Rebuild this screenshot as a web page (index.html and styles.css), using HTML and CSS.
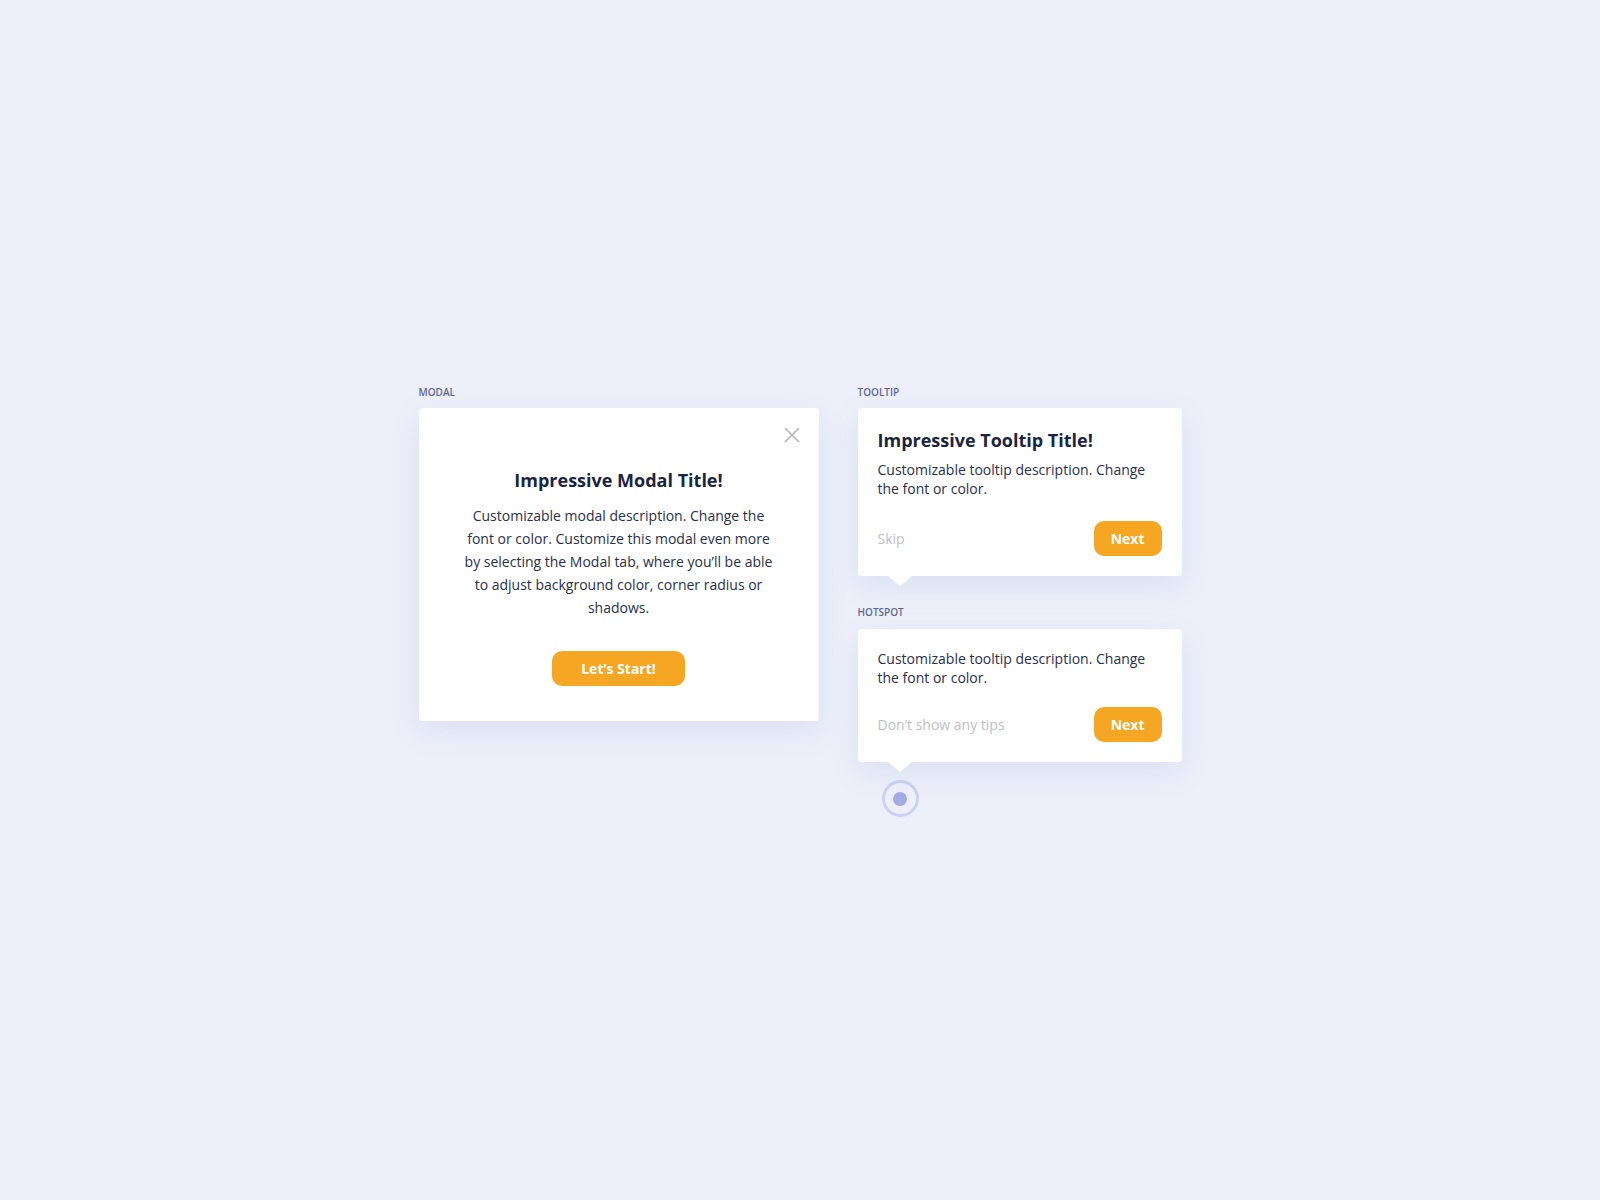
FILE: index.html
```html
<!DOCTYPE html>
<html lang="en">
<head>
    <meta charset="UTF-8">
    <meta name="viewport" content="width=device-width, initial-scale=1.0">
    <title>Onboarding Components</title>
    <link rel="stylesheet" href="styles.css">
</head>
<body>

    <div class="board">
        <div class="column modal-column">
            <div class="label">Modal</div>
            <div class="card modal">
                <button class="close" type="button" aria-label="Close">
                    <svg width="16" height="16" viewBox="0 0 16 16">
                        <path d="M1 1 L15 15 M15 1 L1 15" stroke="#b4b4b8" stroke-width="1.6" fill="none"/>
                    </svg>
                </button>
                <h2 class="modal-title">Impressive Modal Title!</h2>
                <p class="modal-text">Customizable modal description. Change the font or color. Customize this modal even more by selecting the Modal tab, where you’ll be able to adjust background color, corner radius or shadows.</p>
                <button class="btn" type="button">Let’s Start!</button>
            </div>
        </div>

        <div class="column tip-column">
            <div class="label">Tooltip</div>
            <div class="card tip">
                <h3 class="tip-title">Impressive Tooltip Title!</h3>
                <p class="tip-text">Customizable tooltip description. Change the font or color.</p>
                <div class="tip-footer">
                    <span class="muted">Skip</span>
                    <button class="btn" type="button">Next</button>
                </div>
            </div>

            <div class="label hotspot-label">Hotspot</div>
            <div class="card tip">
                <p class="tip-text">Customizable tooltip description. Change the font or color.</p>
                <div class="tip-footer hotspot-footer">
                    <span class="muted">Don’t show any tips</span>
                    <button class="btn" type="button">Next</button>
                </div>
            </div>
            <div class="hotspot"><span class="dot"></span></div>
        </div>
    </div>

</body>
</html>
```

FILE: styles.css
```css
body {
    margin: 0;
    font-family: "Open Sans", "Noto Sans", Arial, sans-serif;
    background-color: #edf0fa;
    color: #1f2944;
}

.board {
    display: flex;
    justify-content: center;
    gap: 39px;
    padding-top: 385px;
}

.column {
    display: flex;
    flex-direction: column;
}

.modal-column {
    width: 400px;
}

.tip-column {
    width: 324px;
}

.label {
    font-size: 10px;
    line-height: 14px;
    font-weight: 600;
    text-transform: uppercase;
    color: #5f6890;
    margin-bottom: 9px;
}

.hotspot-label {
    margin-top: 29px;
    margin-bottom: 10px;
}

.card {
    position: relative;
    background-color: white;
    border-radius: 4px;
    box-shadow: 0 10px 30px rgba(95, 115, 200, 0.13);
}

.modal {
    display: flex;
    flex-direction: column;
    align-items: center;
    padding: 60px 40px 35px;
}

.close {
    position: absolute;
    top: 19px;
    right: 19px;
    padding: 0;
    border: none;
    background: none;
    line-height: 0;
    cursor: pointer;
}

.modal-title {
    margin: 0;
    font-size: 18px;
    line-height: 24px;
    font-weight: 700;
    color: #1c2540;
}

.modal-text {
    margin: 12px 0 0;
    max-width: 312px;
    font-size: 14px;
    line-height: 23px;
    text-align: center;
    color: #28304a;
}

.btn {
    font-family: inherit;
    font-size: 14px;
    font-weight: 700;
    color: white;
    background-color: #f5a623;
    border: none;
    border-radius: 10px;
    height: 35px;
    padding: 0 17px;
    cursor: pointer;
}

.modal .btn {
    margin-top: 32px;
    padding: 0 29px;
}

.tip {
    padding: 20px;
}

.tip::after {
    content: "";
    position: absolute;
    left: 30px;
    bottom: -10px;
    border-left: 12px solid transparent;
    border-right: 12px solid transparent;
    border-top: 10px solid white;
}

.tip-title {
    margin: 0 0 8px;
    font-size: 18px;
    line-height: 24px;
    font-weight: 700;
    color: #1c2540;
}

.tip-text {
    margin: 0;
    font-size: 14px;
    line-height: 19px;
    color: #28304a;
}

.tip-footer {
    display: flex;
    justify-content: space-between;
    align-items: center;
    margin-top: 23px;
}

.hotspot-footer {
    margin-top: 20px;
}

.muted {
    font-size: 14px;
    color: #c0c0c4;
}

.hotspot {
    width: 31px;
    height: 31px;
    margin: 18px 0 0 24px;
    border: 3px solid #ccd3ee;
    border-radius: 50%;
    display: flex;
    align-items: center;
    justify-content: center;
}

.dot {
    width: 14px;
    height: 14px;
    border-radius: 50%;
    background-color: #a3ade2;
}
```
